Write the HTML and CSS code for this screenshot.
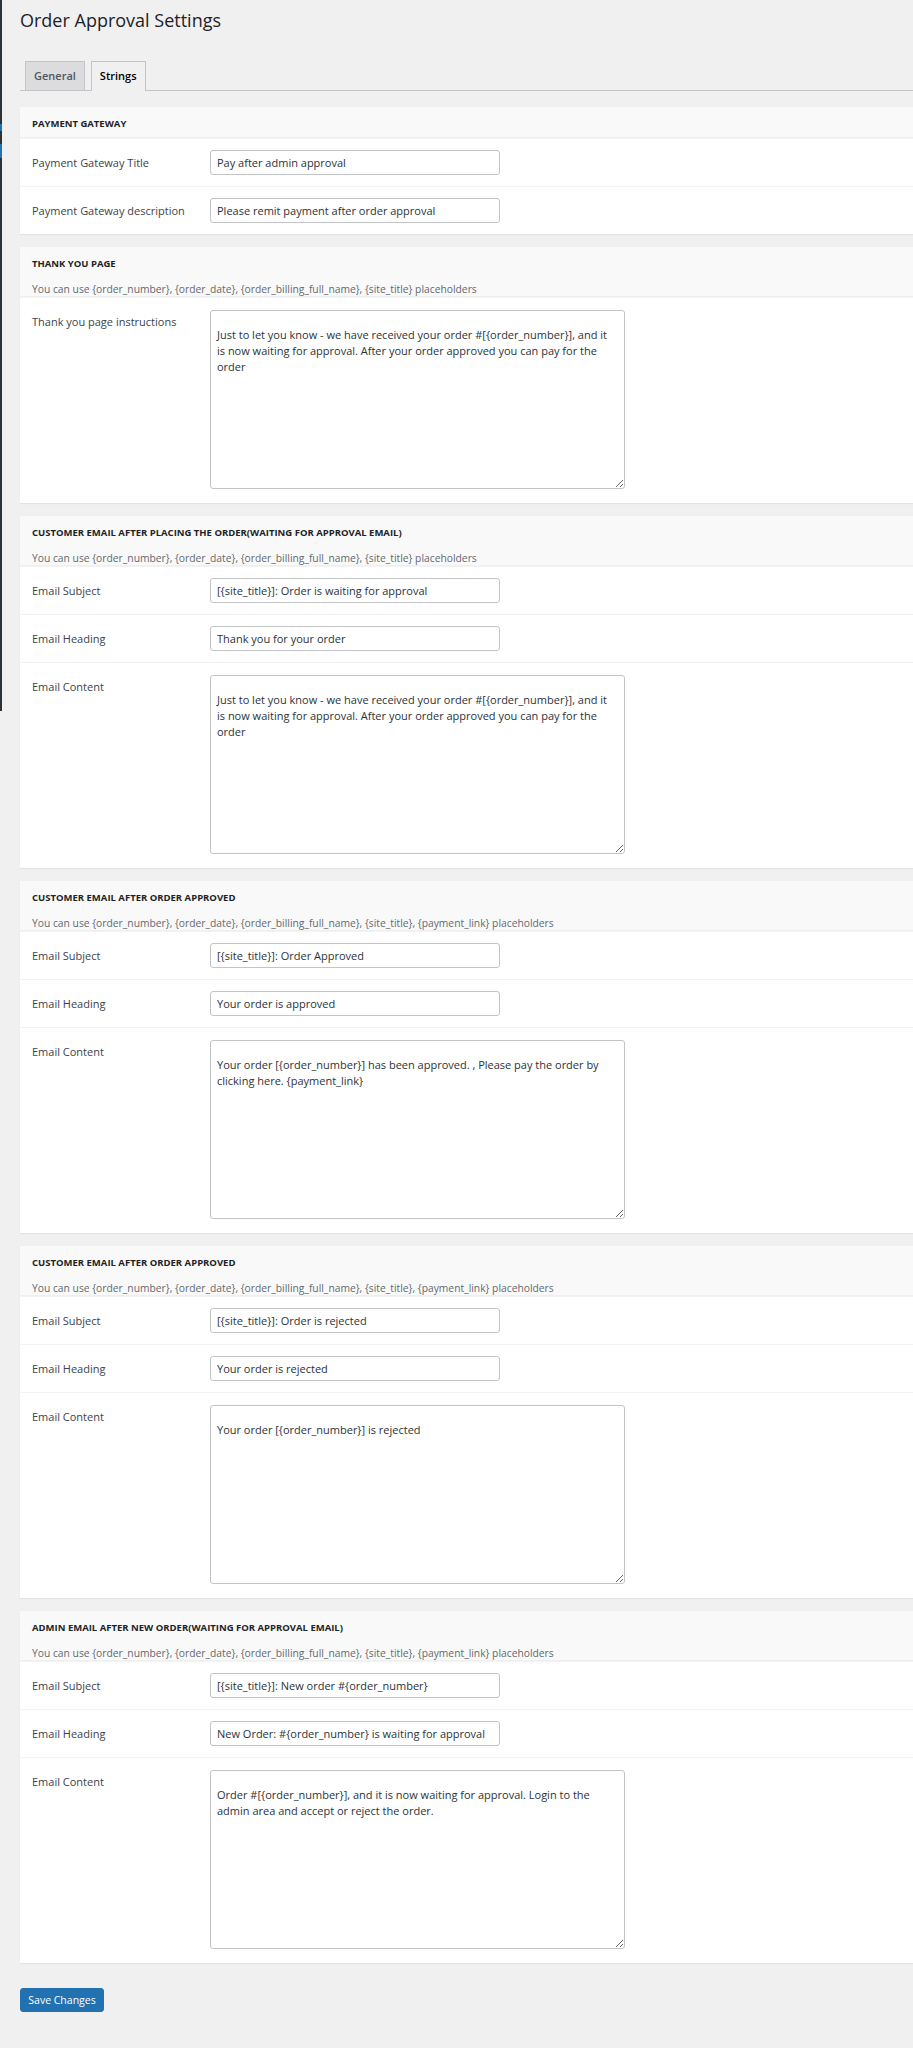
FILE: index.html
```html
<!DOCTYPE html>
<html lang="en">
<head>
  <meta charset="UTF-8" />
  <title>Order Approval Settings</title>
  <meta name="viewport" content="width=device-width, initial-scale=1.0" />
  <link rel="stylesheet" href="styles.css">
</head>
<body>

<div class="adminmenu-edge">
  <span class="mark mark-a"></span>
  <span class="mark mark-b"></span>
</div>

<div class="wrap">
  <h1>Order Approval Settings</h1>

  <nav class="tabs">
    <a class="tab">General</a>
    <a class="tab active">Strings</a>
  </nav>

  <form class="settings">

    <!-- Payment gateway -->
    <div class="panel">
      <div class="panel-head">
        <h3>Payment Gateway</h3>
      </div>
      <div class="row">
        <label>Payment Gateway Title</label>
        <input type="text" value="Pay after admin approval">
      </div>
      <div class="row">
        <label>Payment Gateway description</label>
        <input type="text" value="Please remit payment after order approval">
      </div>
    </div>

    <!-- Thank you page -->
    <div class="panel">
      <div class="panel-head has-desc">
        <h3>Thank you page</h3>
        <p>You can use {order_number}, {order_date}, {order_billing_full_name}, {site_title} placeholders</p>
      </div>
      <div class="row row-area">
        <label>Thank you page instructions</label>
        <textarea>Just to let you know - we have received your order #[{order_number}], and it is now waiting for approval. After your order approved you can pay for the order</textarea>
      </div>
    </div>

    <!-- Waiting for approval -->
    <div class="panel">
      <div class="panel-head has-desc">
        <h3>Customer email after placing the order(waiting for approval email)</h3>
        <p>You can use {order_number}, {order_date}, {order_billing_full_name}, {site_title} placeholders</p>
      </div>
      <div class="row">
        <label>Email Subject</label>
        <input type="text" value="[{site_title}]: Order is waiting for approval">
      </div>
      <div class="row">
        <label>Email Heading</label>
        <input type="text" value="Thank you for your order">
      </div>
      <div class="row row-area">
        <label>Email Content</label>
        <textarea>Just to let you know - we have received your order #[{order_number}], and it is now waiting for approval. After your order approved you can pay for the order</textarea>
      </div>
    </div>

    <!-- Approved -->
    <div class="panel">
      <div class="panel-head has-desc">
        <h3>Customer email after order approved</h3>
        <p>You can use {order_number}, {order_date}, {order_billing_full_name}, {site_title}, {payment_link} placeholders</p>
      </div>
      <div class="row">
        <label>Email Subject</label>
        <input type="text" value="[{site_title}]: Order Approved">
      </div>
      <div class="row">
        <label>Email Heading</label>
        <input type="text" value="Your order is approved">
      </div>
      <div class="row row-area">
        <label>Email Content</label>
        <textarea>Your order [{order_number}] has been approved. , Please pay the order by clicking here. {payment_link}</textarea>
      </div>
    </div>

    <!-- Rejected -->
    <div class="panel">
      <div class="panel-head has-desc">
        <h3>Customer email after order approved</h3>
        <p>You can use {order_number}, {order_date}, {order_billing_full_name}, {site_title}, {payment_link} placeholders</p>
      </div>
      <div class="row">
        <label>Email Subject</label>
        <input type="text" value="[{site_title}]: Order is rejected">
      </div>
      <div class="row">
        <label>Email Heading</label>
        <input type="text" value="Your order is rejected">
      </div>
      <div class="row row-area">
        <label>Email Content</label>
        <textarea>Your order [{order_number}] is rejected</textarea>
      </div>
    </div>

    <!-- Admin -->
    <div class="panel">
      <div class="panel-head has-desc">
        <h3>Admin email after new order(waiting for approval email)</h3>
        <p>You can use {order_number}, {order_date}, {order_billing_full_name}, {site_title}, {payment_link} placeholders</p>
      </div>
      <div class="row">
        <label>Email Subject</label>
        <input type="text" value="[{site_title}]: New order #{order_number}">
      </div>
      <div class="row">
        <label>Email Heading</label>
        <input type="text" value="New Order: #{order_number} is waiting for approval">
      </div>
      <div class="row row-area">
        <label>Email Content</label>
        <textarea>Order #[{order_number}], and it is now waiting for approval. Login to the admin area and accept or reject the order.</textarea>
      </div>
    </div>

    <button type="submit" class="save">Save Changes</button>
  </form>
</div>

</body>
</html>
```

FILE: styles.css
```css
body, html {
  margin: 0;
  padding: 0;
}

body {
  background: #f0f0f1;
  font-family: "Open Sans", "Noto Sans", sans-serif;
  font-size: 11px;
  color: #3c434a;
  display: flex;
  align-items: flex-start;
  overflow-x: hidden;
}

.adminmenu-edge {
  flex: 0 0 2px;
  height: 711px;
  background: #2c3338;
  display: flex;
  flex-direction: column;
}

.adminmenu-edge .mark {
  display: block;
  background: #2271b1;
}

.mark-a {
  height: 7px;
  margin-top: 124px;
}

.mark-b {
  height: 14px;
  margin-top: 13px;
}

.wrap {
  flex: 1;
  padding-left: 18px;
}

h1 {
  font-size: 18px;
  font-weight: 400;
  color: #1d2327;
  margin: 0;
  padding-top: 7px;
  line-height: 26px;
}

.tabs {
  display: flex;
  gap: 6px;
  margin-top: 28px;
  padding-left: 5px;
  border-bottom: 1px solid #c3c4c7;
  height: 29px;
}

.tab {
  display: block;
  height: 28px;
  line-height: 28px;
  padding: 0 8px;
  font-weight: 600;
  font-size: 11px;
  color: #50575e;
  background: #dcdcde;
  border: 1px solid #c3c4c7;
  border-bottom: none;
}

.tab.active {
  background: #f0f0f1;
  color: #000;
  height: 29px;
  margin-bottom: -1px;
}

.settings {
  padding-top: 16px;
}

.panel {
  background: #fff;
  margin-bottom: 13px;
  box-shadow: 0 1px 1px rgba(0, 0, 0, 0.05);
}

.panel-head {
  background: #f9f9f9;
  padding: 11px 12px 7px;
  border-bottom: 1px solid #efefef;
}

.panel-head.has-desc {
  padding-bottom: 0;
}

.panel-head h3 {
  margin: 0;
  font-size: 9.5px;
  line-height: 12px;
  font-weight: 700;
  text-transform: uppercase;
  color: #1d2327;
}

.panel-head p {
  margin: 12px 0 0;
  font-size: 10.3px;
  line-height: 14px;
  color: #646970;
}

.row {
  display: flex;
  align-items: flex-start;
  padding: 11px 12px;
  border-top: 1px solid #f3f3f3;
}

.row label {
  flex: 0 0 178px;
  line-height: 25px;
}

.row-area {
  padding-top: 12px;
  padding-bottom: 14px;
}

.row-area label {
  line-height: 16px;
  padding-top: 4px;
}

input[type="text"] {
  width: 290px;
  height: 25px;
  box-sizing: border-box;
  border: 1px solid #c3c4c7;
  border-radius: 3px;
  padding: 0 6px;
  font-family: inherit;
  font-size: 11px;
  color: #2c3338;
  background: #fff;
}

textarea {
  display: block;
  width: 415px;
  height: 179px;
  box-sizing: border-box;
  border: 1px solid #c3c4c7;
  border-radius: 3px;
  padding: 16px 12px 6px 6px;
  font-family: inherit;
  font-size: 11px;
  line-height: 16px;
  color: #2c3338;
  background: #fff;
}

.save {
  margin-top: 12px;
  margin-bottom: 36px;
  height: 24px;
  width: 84px;
  padding: 0;
  background: #2271b1;
  border: 1px solid #2271b1;
  border-radius: 3px;
  color: #fff;
  font-family: inherit;
  font-size: 10.5px;
  cursor: pointer;
}
```
